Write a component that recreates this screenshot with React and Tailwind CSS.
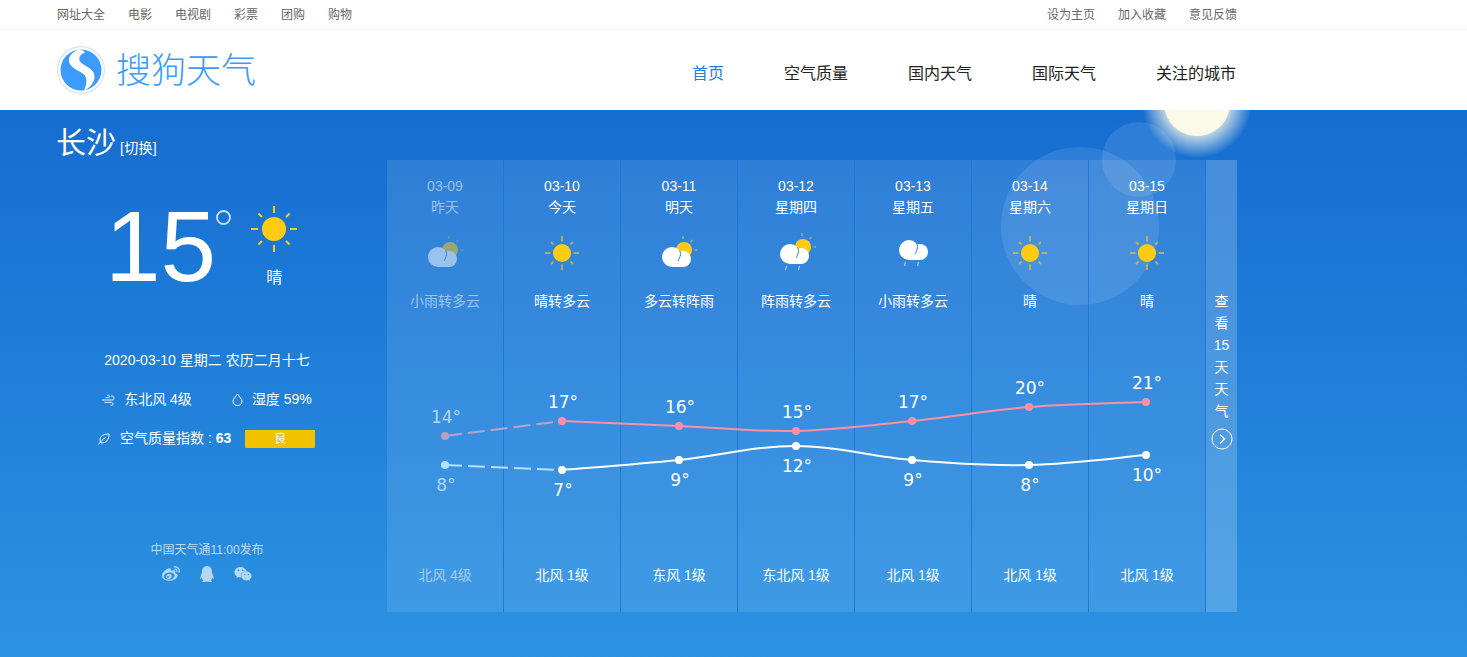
import React from "react";
import { FaWeibo, FaQq, FaWeixin } from "react-icons/fa";

const font = { fontFamily: '"Liberation Sans","Noto Sans CJK SC",sans-serif' };

function Rays({ cx, cy, inner, outer, diag1, diag2, opacity = 1, width = 2, color = "#ffcb13" }) {
  const lines = [];
  for (let i = 0; i < 8; i++) {
    const a = (i * Math.PI) / 4;
    const d = i % 2 ? diag1 : inner;
    const e = i % 2 ? diag2 : outer;
    lines.push(
      <line key={i} x1={cx + Math.cos(a) * d} y1={cy + Math.sin(a) * d} x2={cx + Math.cos(a) * e} y2={cy + Math.sin(a) * e} stroke={color} strokeWidth={width} strokeOpacity={opacity} />
    );
  }
  return <g>{lines}</g>;
}

function SunIcon({ size = 40 }) {
  return (
    <svg width={size} height={size} viewBox="0 0 40 40">
      <Rays cx={20} cy={20} inner={11.5} outer={17} diag1={12} diag2={15.5} opacity={0.6} />
      <circle cx="20" cy="20" r="9" fill="#ffcb13" />
    </svg>
  );
}

function BigSun() {
  return (
    <svg width="46" height="46" viewBox="0 0 46 46">
      <Rays cx={23} cy={23} inner={16} outer={23} diag1={17} diag2={22} />
      <circle cx="23" cy="23" r="12" fill="#ffcb13" />
    </svg>
  );
}

function CloudIcon({ dx = 0, dy = 0, sun = false, rain = false, sunX = 25, sunY = 17 }) {
  return (
    <svg width="40" height="40" viewBox="0 0 40 40">
      {sun && (
        <g>
          <line x1={sunX - 1} y1={sunY - 11} x2={sunX - 1} y2={sunY - 14} stroke="#ffcb13" strokeOpacity="0.6" strokeWidth="1.5" />
          <line x1={sunX + 6.5} y1={sunY - 8} x2={sunX + 8.5} y2={sunY - 10} stroke="#ffcb13" strokeOpacity="0.6" strokeWidth="1.5" />
          <line x1={sunX + 10.5} y1={sunY} x2={sunX + 13.5} y2={sunY} stroke="#ffcb13" strokeOpacity="0.6" strokeWidth="1.5" />
          <circle cx={sunX} cy={sunY} r="8" fill="#ffcb13" />
        </g>
      )}
      <g transform={`translate(${dx} ${dy})`}>
        <circle cx="13" cy="24" r="10" fill="#fff" />
        <circle cx="24" cy="26" r="8" fill="#fff" />
        <rect x="12" y="26" width="12" height="8" fill="#fff" />
        <path d="M20.5 17.5C21.8 19.5 21.8 21.5 21 22.5M22 22C20.5 23.5 20.5 26 19 28" fill="none" stroke="#3180d9" strokeWidth="1" />
        {rain && (
          <g stroke="#fff" strokeOpacity="0.55" strokeWidth="1.3">
            <line x1="9.5" y1="36" x2="8.5" y2="40" />
            <line x1="22.5" y1="36" x2="21.5" y2="40" />
          </g>
        )}
      </g>
    </svg>
  );
}

const days = [
  { d: "03-09", w: "昨天", t: "小雨转多云", wind: "北风 4级", icon: <CloudIcon sun />, dim: true },
  { d: "03-10", w: "今天", t: "晴转多云", wind: "北风 1级", icon: <SunIcon /> },
  { d: "03-11", w: "明天", t: "多云转阵雨", wind: "东风 1级", icon: <CloudIcon sun /> },
  { d: "03-12", w: "星期四", t: "阵雨转多云", wind: "东北风 1级", icon: <CloudIcon sun rain dx={1} dy={-3} sunX={27} sunY={14} /> },
  { d: "03-13", w: "星期五", t: "小雨转多云", wind: "北风 1级", icon: <CloudIcon rain dx={3} dy={-7} /> },
  { d: "03-14", w: "星期六", t: "晴", wind: "北风 1级", icon: <SunIcon /> },
  { d: "03-15", w: "星期日", t: "晴", wind: "北风 1级", icon: <SunIcon /> },
];

const xs = [58, 175, 292, 409, 525, 642, 759];
const high = [276, 261, 266, 271, 261, 247, 242];
const low = [305, 310, 300, 286, 300, 305, 295];
const highL = ["14°", "17°", "16°", "15°", "17°", "20°", "21°"];
const lowL = ["8°", "7°", "9°", "12°", "9°", "8°", "10°"];

function smooth(ys, from, to) {
  const pts = xs.map((x, i) => [x, ys[i]]);
  let d = `M${pts[from][0]} ${pts[from][1]}`;
  for (let i = from; i < to; i++) {
    const p0 = pts[Math.max(i - 1, from)];
    const p1 = pts[i];
    const p2 = pts[i + 1];
    const p3 = pts[Math.min(i + 2, pts.length - 1)];
    const k = 0.18;
    d += `C${p1[0] + (p2[0] - p0[0]) * k} ${p1[1] + (p2[1] - p0[1]) * k} ${p2[0] - (p3[0] - p1[0]) * k} ${p2[1] - (p3[1] - p1[1]) * k} ${p2[0]} ${p2[1]}`;
  }
  return d;
}

function Chart() {
  const textFont = '"DejaVu Sans",sans-serif';
  return (
    <svg className="absolute left-0 top-0 pointer-events-none" width="819" height="452" viewBox="0 0 819 452">
      <path d={`M${xs[0]} ${high[0]}L${xs[1]} ${high[1]}`} fill="none" stroke="#b9a3c6" strokeWidth="2" strokeDasharray="17 6" />
      <path d={smooth(high, 1, 6)} fill="none" stroke="#ff8fa6" strokeWidth="2" />
      <path d={`M${xs[0]} ${low[0]}L${xs[1]} ${low[1]}`} fill="none" stroke="#b5e1fa" strokeWidth="2" strokeDasharray="17 6" />
      <path d={smooth(low, 1, 6)} fill="none" stroke="#fff" strokeWidth="2" />
      {xs.map((x, i) => (
        <g key={x} style={{ fontFamily: textFont, fontSize: 17 }}>
          <circle cx={x} cy={high[i]} r="4" fill={i === 0 ? "#b9a0c0" : "#ff8fa6"} />
          <circle cx={x} cy={low[i]} r="4" fill={i === 0 ? "#b5e1fa" : "#fff"} />
          <text x={x + 1} y={high[i] - 13} textAnchor="middle" fill={i === 0 ? "#aed6f5" : "#fff"}>{highL[i]}</text>
          <text x={x + 1} y={low[i] + 26} textAnchor="middle" fill={i === 0 ? "#aed6f5" : "#fff"}>{lowL[i]}</text>
        </g>
      ))}
    </svg>
  );
}

function WindIcon() {
  return (
    <svg width="13" height="12" viewBox="0 0 13 12" fill="none" stroke="#fff" strokeWidth="0.9">
      <path d="M0 6H10A2 2 0 1 0 8.5 2.7" />
      <path d="M3.5 3.6H6.2A1.2 1.2 0 1 0 5.3 1.6" />
      <path d="M2.5 8.4H9.5A1.5 1.5 0 1 1 8.5 11" />
    </svg>
  );
}
function DropIcon() {
  return (
    <svg width="11" height="13" viewBox="0 0 11 13" fill="none" stroke="#fff" strokeWidth="1">
      <path d="M5.5 1C3.5 4 1 6 1 8.3A4.5 4.3 0 0 0 10 8.3C10 6 7.5 4 5.5 1Z" />
    </svg>
  );
}
function LeafIcon() {
  return (
    <svg width="12" height="12" viewBox="0 0 12 12" fill="none" stroke="#fff" strokeWidth="0.9">
      <path d="M11 1C5 1 2 3 2 7C2 8 2.3 9 3 9.8C8 10.5 11 7 11 1Z" />
      <path d="M0.5 11.5C2.5 8.5 4.5 6.5 7.5 4.5" />
    </svg>
  );
}
function Logo() {
  return (
    <svg width="48" height="48" viewBox="0 0 48 48">
      <circle cx="24" cy="24" r="23.4" fill="#fff" stroke="#d5e3f1" strokeWidth="1.2" />
      <circle cx="24" cy="24" r="20.5" fill="#3b9bff" />
      <path d="M22 3.5C16 5.5 11 10 12 15.5C13 21 20 24 25 27C30 30 31 36 27 44.5C33 42 38 36 37.5 30C37 23 29 20.5 25 17.5C21 14.5 21 9 28 6.5C26 4 24 3.5 22 3.5Z" fill="#fff" />
    </svg>
  );
}

export default function App() {
  return (
    <div style={font} className="w-full h-[657px] overflow-hidden bg-white">
      <div className="h-[30px] border-b border-[#f3f3f3]">
        <div className="ml-[57px] w-[1180px] h-[29px] flex items-center justify-between text-xs text-[#666]">
          <div className="flex gap-[23px]">
            <span>网址大全</span><span>电影</span><span>电视剧</span><span>彩票</span><span>团购</span><span>购物</span>
          </div>
          <div className="flex gap-[23px]">
            <span>设为主页</span><span>加入收藏</span><span>意见反馈</span>
          </div>
        </div>
      </div>
      <div className="h-[80px]">
        <div className="ml-[57px] w-[1180px] h-full flex items-center justify-between">
          <div className="flex items-center gap-[11px]">
            <Logo />
            <span className="text-[35px] leading-none font-light text-[#3b9bff] whitespace-nowrap">搜狗天气</span>
          </div>
          <div className="flex gap-[60px] text-base text-[#222] mt-[8px] mr-[1px]">
            <span className="text-[#2a7de0]">首页</span>
            <span>空气质量</span>
            <span>国内天气</span>
            <span>国际天气</span>
            <span>关注的城市</span>
          </div>
        </div>
      </div>
      <div className="relative h-[547px] overflow-hidden bg-linear-to-b from-[#166dd1] to-[#2c92e2]">
        <div className="absolute left-[1142px] top-[-62px] w-[110px] h-[110px] rounded-full bg-[radial-gradient(circle_closest-side,#fbfae8_0%,#fbfae8_59%,rgba(251,250,232,0.7)_61%,rgba(251,250,232,0)_100%)]" />
        <div className="absolute left-[1001px] top-[37px] w-[158px] h-[158px] rounded-full bg-white/10" />
        <div className="absolute left-[1102px] top-[12px] w-[74px] h-[75px] rounded-full bg-white/10" />
        <div className="relative ml-[57px] w-[1180px] flex text-white">
          <div className="w-[330px] shrink-0">
            <div className="w-[300px] flex flex-col">
              <div className="h-[50px] pt-[12px] flex items-baseline">
                <span className="text-[30px] leading-[42px] ml-[-1px]">长沙</span>
                <span className="text-sm ml-[4px] tracking-[0.3px]">[切换]</span>
              </div>
              <div className="h-[145px] flex relative">
                <span className="text-[100px] leading-[110px] mt-[31px] ml-[48px]">15</span>
                <div className="w-[15px] h-[15px] rounded-full border-2 border-white/75 mt-[50px]" />
                <div className="flex flex-col items-center ml-[20px] mt-[46px] w-[46px]">
                  <BigSun />
                  <span className="text-base leading-[22px] mt-[15px]">晴</span>
                </div>
              </div>
              <div className="text-sm leading-[21px] text-center mt-[45px]">2020-03-10 星期二 农历二月十七</div>
              <div className="flex items-center justify-center text-sm leading-[21px] mt-[18px]">
                <WindIcon />
                <span className="ml-[9px]">东北风 4级</span>
                <span className="ml-[40px]"><DropIcon /></span>
                <span className="ml-[9px]">湿度 59%</span>
              </div>
              <div className="flex items-center text-sm leading-[21px] mt-[18px] pl-[41px]">
                <LeafIcon />
                <span className="ml-[10px]">空气质量指数 : <b>63</b></span>
                <span className="ml-[14px] w-[70px] h-[18px] rounded-[1px] bg-[#f2c200] text-xs leading-[18px] text-center">良</span>
              </div>
              <div className="text-xs leading-[18px] text-center text-white/70 mt-[92px]">中国天气通11:00发布</div>
              <div className="flex justify-center gap-[20px] mt-[6px] text-white/65">
                <FaWeibo className="w-[18px] h-[18px]" />
                <FaQq className="w-[14px] h-[18px]" />
                <FaWeixin className="w-[18px] h-[18px]" />
              </div>
            </div>
          </div>
          <div className="relative mt-[50px] h-[452px] flex">
            {days.map((day) => (
              <div key={day.d} className="relative w-[117px] h-[452px] bg-white/10 border-r border-[#1f78d8] flex flex-col items-center pt-[16px] pb-[26px] text-sm leading-[21px] text-center">
                <div className={day.dim ? "flex flex-col items-center h-full opacity-50" : "flex flex-col items-center h-full"}>
                  <div>{day.d}</div>
                  <div>{day.w}</div>
                  <div className="h-[40px] mt-[15px]">{day.icon}</div>
                  <div className="mt-[18px]">{day.t}</div>
                  <div className="mt-auto">{day.wind}</div>
                </div>
              </div>
            ))}
            <Chart />
            <div className="w-[31px] h-[452px] bg-white/20 flex flex-col items-center pt-[130px] text-sm leading-[22px]">
              <span>查</span><span>看</span><span>15</span><span>天</span><span>天</span><span>气</span>
              <svg className="mt-[6px]" width="22" height="22" viewBox="0 0 22 22" fill="none" stroke="#fff">
                <circle cx="11" cy="11" r="10" />
                <path d="M9 6.5L13.5 11L9 15.5" strokeWidth="1.3" />
              </svg>
            </div>
          </div>
        </div>
      </div>
    </div>
  );
}
